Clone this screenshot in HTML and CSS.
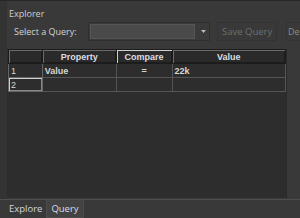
FILE: index.html
```html
<!DOCTYPE html>
<html>
<head>
<meta charset="utf-8">
<link rel="stylesheet" href="styles.css">
</head>
<body>
<div class="app">
  <div class="main">
    <div class="strip"></div>
    <div class="panel">
      <div class="head">
        <div class="title">Explorer</div>
        <div class="toolbar">
          <span class="label">Select a Query:</span>
          <div class="combo">
            <div class="field"></div>
            <div class="arrow"><svg width="5" height="3" viewBox="0 0 5 3"><path d="M0 0h5L2.5 3z" fill="#bbb"/></svg></div>
          </div>
          <div class="btn">Save Query</div>
          <div class="btn cut">De</div>
        </div>
      </div>
      <div class="body">
        <div class="gridbox">
          <table class="grid">
            <tr>
              <th class="corner"></th>
              <th class="c-prop">Property</th>
              <th class="c-cmp hot">Compare</th>
              <th class="c-val">Value</th>
            </tr>
            <tr>
              <td class="rh">1</td>
              <td>Value</td>
              <td class="mid">=</td>
              <td>22k</td>
            </tr>
            <tr>
              <td class="rh cur">2</td>
              <td></td>
              <td></td>
              <td></td>
            </tr>
          </table>
        </div>
      </div>
    </div>
  </div>
  <div class="tabs">
    <div class="tab">Explore</div>
    <div class="tab sel">Query</div>
  </div>
</div>
</body>
</html>
```
FILE: styles.css
```css
* { box-sizing: border-box; }
html, body { margin: 0; padding: 0; }
body {
  width: 300px; height: 218px; overflow: hidden;
  background: #333;
  font-family: "Open Sans", "Noto Sans", sans-serif;
  font-size: 9px; color: #d2d2d2;
}
.app { display: flex; flex-direction: column; height: 218px; }
.main { flex: 1; display: flex; border-top: 1px solid #262626; min-height: 0; }
.strip { width: 7px; background: #333; }
.panel { flex: 1; display: flex; flex-direction: column; min-width: 0; }
.head { background: #393939; height: 45px; padding-top: 5px; }
.title { height: 16px; line-height: 16px; padding-left: 2px; color: #cfcfcf; }
.toolbar { display: flex; align-items: center; height: 19px; padding-left: 7px; }
.label { width: 74px; color: #d4d4d4; white-space: nowrap; }
.combo { display: flex; width: 123px; height: 19px; border: 1px solid #2f2f2f; background: #3a3a3a; }
.field { width: 105px; margin: 1px; background: #4a4a4a; border: 1px solid #555; }
.arrow { flex: 1; display: flex; align-items: center; justify-content: center; padding-left: 2px; }
.btn { margin-left: 7px; width: 60px; height: 19px; line-height: 17px; text-align: center; border: 1px solid #333; background: #393939; color: #6e6e6e; white-space: nowrap; font-size: 9.5px; }
.btn.cut { margin-left: 9px; width: 14px; padding-left: 1px; text-align: left; border-right: none; color: #8a8a8a; font-size: 9px; }
.body { flex: 1; display: flex; padding: 3px 13px 1px 0; background: #393939; min-height: 0; }
.gridbox { flex: 1; background: #2d2d2d; padding: 0 0 0 1px; border-right: 1px solid #2a2a2a; }
.grid { border-collapse: collapse; font-family: "Liberation Sans", Arial, sans-serif; font-size: 9px; }
.grid th {
  height: 14px; padding: 0; font-weight: bold; color: #dadde2; background: #2a2a2a;
  border: 1px solid #1c1c1c; box-shadow: inset 1px 1px 0 #6a6a6a, inset -1px -1px 0 #1c1c1c;
  text-align: center; line-height: 12px;
}
.grid th.hot { box-shadow: inset 1px 1px 0 #cfcfcf, inset -1px -1px 0 #1c1c1c; }
.corner { width: 34px; }
.c-prop { width: 74px; }
.c-cmp { width: 56px; }
.c-val { width: 114px; }
.grid td {
  height: 14px; padding: 0 2px; border: 1px solid #555; color: #d6d6d6;
  font-weight: bold; line-height: 12px; vertical-align: middle; background: #2d2d2d;
}
.grid td.rh { border-color: #666; font-weight: normal; }
.grid td.cur { height: 12px; box-shadow: inset 1px 1px 0 #d0d0d0, inset -1px -1px 0 #888; }
.grid td.mid { text-align: center; }
.tabs { height: 19px; display: flex; padding-left: 5px; background: #393939; border-top: 1px solid #4e4e4e; }
.tab { height: 18px; line-height: 17px; padding: 0 4px; color: #d0d6e0; font-size: 9.5px; }
.tab.sel { background: #434343; border: 1px solid #4c4c4c; border-top: none; color: #d6dde8; }
```
